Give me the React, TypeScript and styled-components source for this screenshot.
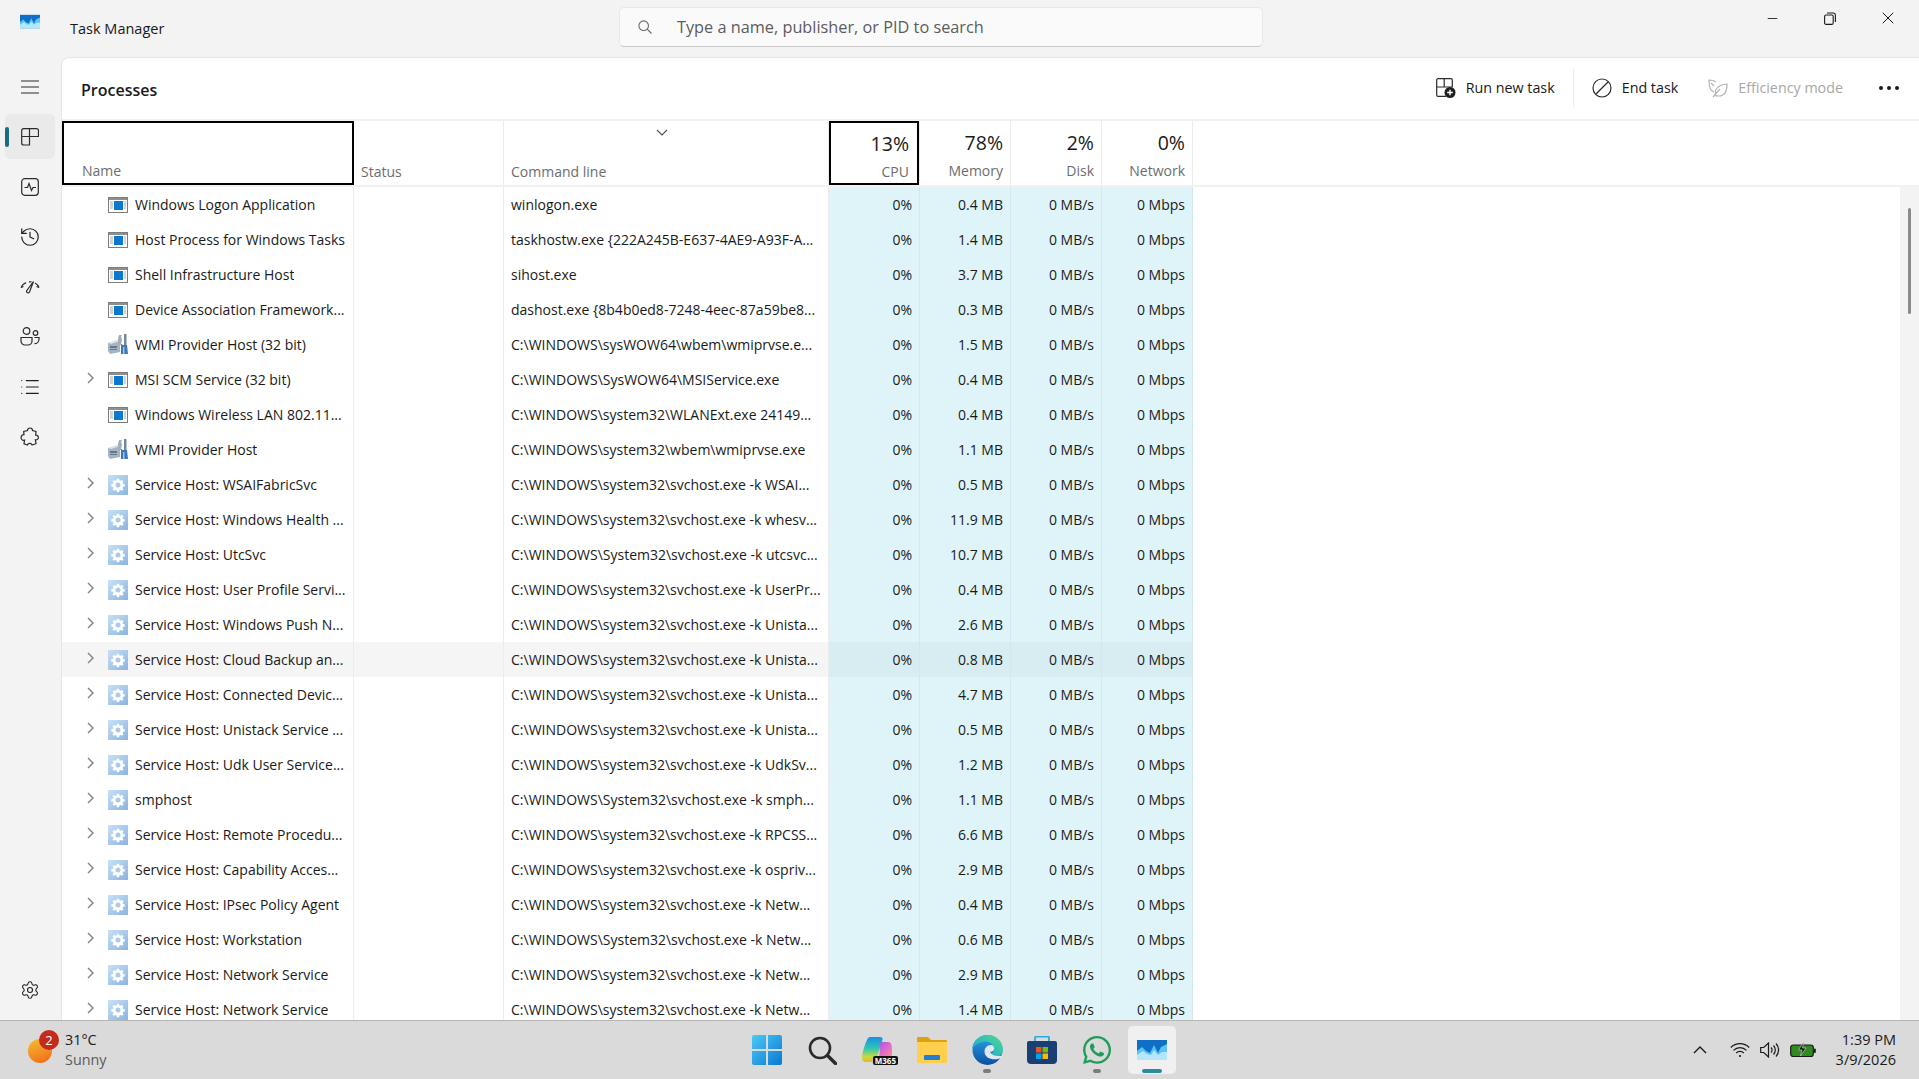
import styled, { createGlobalStyle } from "styled-components";
import { FaWhatsapp } from "react-icons/fa";
import { History, List, Settings, Minus, X } from "lucide-react";

type Kind = "window" | "tool" | "gear";

interface IRow {
  name: string;
  cmd: string;
  mem: string;
  kind: Kind;
  expand?: boolean;
}

const SYS = "C:\\WINDOWS\\system32\\svchost.exe -k ";
const SYS2 = "C:\\WINDOWS\\System32\\svchost.exe -k ";

const rows: IRow[] = [
  { name: "Windows Logon Application", cmd: "winlogon.exe", mem: "0.4 MB", kind: "window" },
  { name: "Host Process for Windows Tasks", cmd: "taskhostw.exe {222A245B-E637-4AE9-A93F-A...", mem: "1.4 MB", kind: "window" },
  { name: "Shell Infrastructure Host", cmd: "sihost.exe", mem: "3.7 MB", kind: "window" },
  { name: "Device Association Framework...", cmd: "dashost.exe {8b4b0ed8-7248-4eec-87a59be8...", mem: "0.3 MB", kind: "window" },
  { name: "WMI Provider Host (32 bit)", cmd: "C:\\WINDOWS\\sysWOW64\\wbem\\wmiprvse.e...", mem: "1.5 MB", kind: "tool" },
  { name: "MSI SCM Service (32 bit)", cmd: "C:\\WINDOWS\\SysWOW64\\MSIService.exe", mem: "0.4 MB", kind: "window", expand: true },
  { name: "Windows Wireless LAN 802.11...", cmd: "C:\\WINDOWS\\system32\\WLANExt.exe 24149...", mem: "0.4 MB", kind: "window" },
  { name: "WMI Provider Host", cmd: "C:\\WINDOWS\\system32\\wbem\\wmiprvse.exe", mem: "1.1 MB", kind: "tool" },
  { name: "Service Host: WSAIFabricSvc", cmd: SYS + "WSAI...", mem: "0.5 MB", kind: "gear", expand: true },
  { name: "Service Host: Windows Health ...", cmd: SYS + "whesv...", mem: "11.9 MB", kind: "gear", expand: true },
  { name: "Service Host: UtcSvc", cmd: SYS2 + "utcsvc...", mem: "10.7 MB", kind: "gear", expand: true },
  { name: "Service Host: User Profile Servi...", cmd: SYS + "UserPr...", mem: "0.4 MB", kind: "gear", expand: true },
  { name: "Service Host: Windows Push N...", cmd: SYS + "Unista...", mem: "2.6 MB", kind: "gear", expand: true },
  { name: "Service Host: Cloud Backup an...", cmd: SYS + "Unista...", mem: "0.8 MB", kind: "gear", expand: true },
  { name: "Service Host: Connected Devic...", cmd: SYS + "Unista...", mem: "4.7 MB", kind: "gear", expand: true },
  { name: "Service Host: Unistack Service ...", cmd: SYS + "Unista...", mem: "0.5 MB", kind: "gear", expand: true },
  { name: "Service Host: Udk User Service...", cmd: SYS + "UdkSv...", mem: "1.2 MB", kind: "gear", expand: true },
  { name: "smphost", cmd: SYS2 + "smph...", mem: "1.1 MB", kind: "gear", expand: true },
  { name: "Service Host: Remote Procedu...", cmd: SYS + "RPCSS...", mem: "6.6 MB", kind: "gear", expand: true },
  { name: "Service Host: Capability Acces...", cmd: SYS + "ospriv...", mem: "2.9 MB", kind: "gear", expand: true },
  { name: "Service Host: IPsec Policy Agent", cmd: SYS + "Netw...", mem: "0.4 MB", kind: "gear", expand: true },
  { name: "Service Host: Workstation", cmd: SYS2 + "Netw...", mem: "0.6 MB", kind: "gear", expand: true },
  { name: "Service Host: Network Service", cmd: SYS + "Netw...", mem: "2.9 MB", kind: "gear", expand: true },
  { name: "Service Host: Network Service", cmd: SYS + "Netw...", mem: "1.4 MB", kind: "gear", expand: true },
];

const HOVER_ROW = 13;
const GEAR_PATH =
  "M12 3.5l1.4 0 .5 2.2 1.6.7 1.9-1.2 1.9 1.9-1.2 1.9.7 1.6 2.2.5v2.8l-2.2.5-.7 1.6 1.2 1.9-1.9 1.9-1.9-1.2-1.6.7-.5 2.2h-2.8l-.5-2.2-1.6-.7-1.9 1.2-1.9-1.9 1.2-1.9-.7-1.6-2.2-.5v-2.8l2.2-.5.7-1.6-1.2-1.9 1.9-1.9 1.9 1.2 1.6-.7.5-2.2z";

function AppLogo({ size = 20, height = 15 }: { size?: number; height?: number }) {
  return (
    <svg width={size} height={height} viewBox="0 0 30 20">
      <rect width="30" height="20" fill="#0f6fc6" />
      <path d="M0 11l5-4 4 4 4 2 4-8 4 8 3-6 6-3v16H0z" fill="#5cc4f5" />
      <path d="M0 15l6-4 4 3 4 1 3-5 4 5 4-3 5 0v8H0z" fill="#b5e6fb" />
    </svg>
  );
}

function RowIcon({ kind }: { kind: Kind }) {
  if (kind === "window") {
    return (
      <svg width="20" height="16" viewBox="0 0 20 16">
        <rect x=".5" y=".5" width="19" height="15" fill="#fff" stroke="#7d7d7d" />
        <rect x="1" y="1" width="18" height="2" fill="#8f8f8f" />
        <rect x="6" y="4" width="9" height="9" fill="#0a78d0" />
        <path d="M2 5h3M2 7h3M2 9h3M2 11h3M16 5h2M16 7h2M16 9h2M16 11h2" stroke="#a9a9a9" />
      </svg>
    );
  }
  if (kind === "tool") {
    return (
      <svg width="20" height="21" viewBox="0 0 20 21">
        <path d="M0 9l12-3v12l-10 2-2-3z" fill="#a3b4c4" />
        <path d="M0 9l11-4 4 1-12 4z" fill="#dde4ea" />
        <path d="M2 12h7v2H2zM2 15h7v1H2z" fill="#66798c" />
        <path d="M10 5l1-4h3l-1 2 1 2-1 6h-2.500z" fill="#a4acb4" />
        <path d="M16 0h2.500v12H16z" fill="#72879b" />
        <path d="M13 10l2 1h4l1 9h-7z" fill="#3a78b8" />
        <path d="M15 13h1.500v7H15z" fill="#9ec4e8" />
      </svg>
    );
  }
  return (
    <svg width="20" height="20" viewBox="0 0 24 24">
      <defs>
        <linearGradient id="tile" x1="0" y1="0" x2="1" y2="1">
          <stop offset="0" stopColor="#c9e0f5" />
          <stop offset="1" stopColor="#8ab4e0" />
        </linearGradient>
      </defs>
      <rect width="24" height="24" fill="url(#tile)" />
      <path d={GEAR_PATH} fill="#fff" transform="translate(1.2 1.2) scale(.9)" />
      <circle cx="12" cy="12" r="3" fill="#a9cbec" />
    </svg>
  );
}

function Chevron() {
  return (
    <svg width="7" height="12" viewBox="0 0 7 12" fill="none" stroke="#808080" strokeWidth="1.4">
      <path d="M1 1l5 5-5 5" />
    </svg>
  );
}

const thin = { strokeWidth: 1.3, color: "#1f1f1f" };

function ProcessesIcon() {
  return (
    <svg width="18" height="18" viewBox="0 0 18 18" fill="none" stroke="#2b2b2b" strokeWidth="1.2">
      <path d="M2.5.7h13a2 2 0 0 1 2 2v5.8H.7V2.5a1.8 1.8 0 0 1 1.8-1.8zM.7 8.500V15a2 2 0 0 0 2 2H8.500V.7" />
    </svg>
  );
}

function PerformanceIcon() {
  return (
    <svg width="18" height="18" viewBox="0 0 18 18" fill="none" stroke="#2b2b2b" strokeWidth="1.2">
      <rect x=".7" y=".7" width="16.6" height="16.6" rx="3" />
      <path d="M3.5 9.5h3l1.5-4 2.5 7 1.500-3h3" />
    </svg>
  );
}

function StartupIcon() {
  return (
    <svg width="20" height="18" viewBox="0 0 20 18" fill="none" stroke="#2b2b2b" strokeWidth="1.2">
      <path d="M1 9.5A9 9 0 0 1 6 4.6M9 3.8h2.500M15 5a9 9 0 0 1 4 4.500" />
      <path d="M13.500 3.500L9.500 14a1.600 1.600 0 0 1-3-1z" />
      <path d="M1 9.500l2.500-1M19 9.500l-2.500-1" />
    </svg>
  );
}

function UsersIcon() {
  return (
    <svg width="20" height="20" viewBox="0 0 20 20" fill="none" stroke="#2b2b2b" strokeWidth="1.2">
      <circle cx="6.500" cy="4" r="3.300" />
      <circle cx="15.500" cy="6" r="2.300" />
      <path d="M1 10.500h11v3.500a4 4 0 0 1-4 4H5a4 4 0 0 1-4-4z" />
      <path d="M14.500 10.500h4.500v2a4.500 4.500 0 0 1-4.500 4.200" />
    </svg>
  );
}

function ServicesIcon() {
  return (
    <svg width="20" height="20" viewBox="0 0 20 20" fill="none" stroke="#2b2b2b" strokeWidth="1.2">
      <path d="M7.500 3.500a2.500 2.500 0 0 1 5 0l3.500 1-.3 3.600a2.400 2.400 0 0 1 2.700 2.400 2.400 2.400 0 0 1-3 2.300l.6 3.900-3.900 1.300a2.500 2.500 0 0 0-4.700 0l-3.400-1.200.5-3.700A2.500 2.500 0 0 1 1.200 10 2.500 2.500 0 0 1 4 7.600l-.3-3.200z" />
    </svg>
  );
}

function RunTaskIcon() {
  return (
    <svg width="20" height="20" viewBox="0 0 20 20">
      <path d="M2 .7h13a1.300 1.300 0 0 1 1.300 1.300v7H.7V2A1.300 1.300 0 0 1 2 .7zM.7 9v8a1.300 1.300 0 0 0 1.300 1.300h8M8.200.7V9" fill="none" stroke="#2b2b2b" strokeWidth="1.2" />
      <circle cx="14" cy="14.500" r="5.500" fill="#1f1f1f" />
      <path d="M14 11.700v5.600M11.200 14.500h5.600" stroke="#fff" strokeWidth="1.400" />
    </svg>
  );
}

function EndTaskIcon() {
  return (
    <svg width="20" height="20" viewBox="0 0 20 20" fill="none" stroke="#2b2b2b" strokeWidth="1.2">
      <circle cx="10" cy="10" r="9" />
      <path d="M4 16L16 4" />
    </svg>
  );
}

function EfficiencyIcon() {
  return (
    <svg width="20" height="20" viewBox="0 0 20 20" fill="none" stroke="#b4b4b4" strokeWidth="1.2">
      <path d="M6 14C2 13 1 8 1 2c3 0 5 .6 7 2" />
      <path d="M8 18c-2-5 0-11 11-12 0 7-2 12-8 12-1.200 0-2.200-.2-3 0zM5 19l7-8" />
      <path d="M3 5l3 3" />
    </svg>
  );
}

function SearchIcon() {
  return (
    <svg width="14" height="14" viewBox="0 0 14 14" fill="none" stroke="#6a6a6a" strokeWidth="1.1">
      <circle cx="5.700" cy="5.700" r="4.800" />
      <path d="M9.200 9.200l4.300 4.300" />
    </svg>
  );
}

function RestoreIcon() {
  return (
    <svg width="12" height="13" viewBox="0 0 12 13" fill="none" stroke="#1a1a1a" strokeWidth="1.100">
      <rect x=".6" y="3" width="8.600" height="9.400" rx="1.500" />
      <path d="M3 1h6.500A2 2 0 0 1 11.400 3v7" />
    </svg>
  );
}

function StartLogo() {
  return (
    <svg width="30" height="30" viewBox="0 0 30 30">
      <defs>
        <linearGradient id="win" x1="0" y1="0" x2="1" y2="1">
          <stop offset="0" stopColor="#4cc9f5" />
          <stop offset="1" stopColor="#0a78d4" />
        </linearGradient>
      </defs>
      <path d="M2 0h12v14H0V2a2 2 0 0 1 2-2zM16 0h12a2 2 0 0 1 2 2v12H16zM0 16h14v14H2a2 2 0 0 1-2-2zM16 16h14v12a2 2 0 0 1-2 2H16z" fill="url(#win)" />
    </svg>
  );
}

function TaskbarSearch() {
  return (
    <svg width="29" height="29" viewBox="0 0 29 29" fill="none" stroke="#2a2a2a">
      <circle cx="12" cy="12" r="10" strokeWidth="2.600" />
      <path d="M19.500 19.500l8 8" strokeWidth="3.400" strokeLinecap="round" />
    </svg>
  );
}

function M365Logo() {
  return (
    <svg width="30" height="27" viewBox="0 0 30 27">
      <defs>
        <linearGradient id="cpa" x1="0" y1="0" x2="0" y2="1">
          <stop offset="0" stopColor="#1a8fe8" />
          <stop offset=".45" stopColor="#2fc6b0" />
          <stop offset=".8" stopColor="#c8dc3a" />
          <stop offset="1" stopColor="#f0b030" />
        </linearGradient>
        <linearGradient id="cpb" x1="0" y1="0" x2="1" y2="1">
          <stop offset="0" stopColor="#7a5cf0" />
          <stop offset=".55" stopColor="#e868c8" />
          <stop offset="1" stopColor="#f59a8a" />
        </linearGradient>
      </defs>
      <path d="M8 0h10c2 0 3 1 2.500 3L15 20c-1 3-3 5-6 5H4c-3 0-4-2-4-4C0 16 3 7 5 3c.6-2 2-3 3-3z" fill="url(#cpa)" />
      <path d="M18 5h8c2 0 3 1 3.500 3 .6 3 .5 7 .5 9 0 3-2 5-5 5H13c3 0 4-2 4.500-4z" fill="url(#cpb)" />
    </svg>
  );
}

function FolderLogo() {
  return (
    <svg width="30" height="26" viewBox="0 0 30 26">
      <path d="M1 0h10l3 3h15a1 1 0 0 1 1 1v8H0V1a1 1 0 0 1 1-1z" fill="#dca30f" />
      <path d="M0 5h30v20a1 1 0 0 1-1 1H1a1 1 0 0 1-1-1z" fill="#ffcf4d" />
      <rect x="7" y="18" width="16" height="5" rx="1" fill="#1f7fd0" />
    </svg>
  );
}

function EdgeLogo() {
  return (
    <svg width="31" height="30" viewBox="0 0 31 30">
      <defs>
        <linearGradient id="ea" x1="0" y1="1" x2="1" y2="0">
          <stop offset="0" stopColor="#1a9de0" />
          <stop offset="1" stopColor="#4fdc8c" />
        </linearGradient>
        <linearGradient id="eb" x1="0" y1="0" x2="0" y2="1">
          <stop offset="0" stopColor="#2aa6e8" />
          <stop offset="1" stopColor="#0c4fa0" />
        </linearGradient>
      </defs>
      <circle cx="15.500" cy="15" r="15" fill="url(#eb)" />
      <path d="M15.500 0C24 0 31 6 31 15c0 4.500-4 7-8 7l-6-3c3 0 5-1.500 5-5 0-4-4-8-9-7.500-5 .5-10 3-13 7.500C1 5 8 0 15.500 0z" fill="url(#ea)" />
      <path d="M12.500 16.500c0-4 3.500-7 7-6.500 2 .3 3 2.500 2.500 4.500-.6 1.800-2.600 2.700-4 2.200 1.500 3.500 6.500 5.500 12.500 3.800l-.8 2C24 26 12.500 24.500 12.500 16.500z" fill="#dfe8ee" />
    </svg>
  );
}

function StoreLogo() {
  return (
    <svg width="30" height="29" viewBox="0 0 30 29">
      <path d="M8 6V2a1.500 1.500 0 0 1 1.500-1.500h11A1.500 1.500 0 0 1 22 2v4" fill="none" stroke="#2ea8e0" strokeWidth="1.800" />
      <path d="M2 5h26a2 2 0 0 1 2 2v17a4 4 0 0 1-4 4H4a4 4 0 0 1-4-4V7a2 2 0 0 1 2-2z" fill="#1a3f75" />
      <rect x="9" y="11" width="5.500" height="5.500" fill="#f05022" />
      <rect x="15.500" y="11" width="5.500" height="5.500" fill="#7fba00" />
      <rect x="9" y="17.500" width="5.500" height="5.500" fill="#00a4ef" />
      <rect x="15.500" y="17.500" width="5.500" height="5.500" fill="#ffb900" />
    </svg>
  );
}

function WifiIcon() {
  return (
    <svg width="20" height="16" viewBox="0 0 20 16" fill="none" stroke="#1a1a1a" strokeWidth="1.200">
      <path d="M.8 5.500a13 13 0 0 1 18.400 0M3.500 8.300a9.200 9.200 0 0 1 13 0M6.200 11a5.300 5.300 0 0 1 7.600 0" />
      <circle cx="10" cy="14" r="1.100" fill="#1a1a1a" stroke="none" />
    </svg>
  );
}

function VolumeIcon() {
  return (
    <svg width="20" height="16" viewBox="0 0 20 16" fill="none" stroke="#1a1a1a" strokeWidth="1.200">
      <path d="M.7 5.500h3L8.500 1v14l-4.800-4.500h-3z" />
      <path d="M11 5.500a3.500 3.500 0 0 1 0 5M13.500 3.500a6.500 6.500 0 0 1 0 9M16 1.500a9.500 9.500 0 0 1 0 13" />
    </svg>
  );
}

function BatteryIcon() {
  return (
    <svg width="26" height="16" viewBox="0 0 26 16">
      <rect x=".7" y="3" width="22.600" height="11.500" rx="2.500" fill="#2f8a1f" stroke="#1a1a1a" strokeWidth="1.200" />
      <rect x="24" y="6.500" width="1.800" height="4.500" rx=".8" fill="#1a1a1a" />
      <path d="M13.500 0L8.500 8h3.500l-1.500 6 5.500-8h-3.500z" fill="#1a1a1a" stroke="#dadada" strokeWidth=".6" />
    </svg>
  );
}

export default function App() {
  return (
    <Screen>
      <GlobalStyle />
      <Window>
        <TitleBar>
          <TitleLeft>
            <LogoSlot>
              <AppLogo />
            </LogoSlot>
            <AppTitle>Task Manager</AppTitle>
          </TitleLeft>
          <SearchBox>
            <SearchIcon />
            <SearchText>Type a name, publisher, or PID to search</SearchText>
          </SearchBox>
          <WindowButtons>
            <WindowButton>
              <Minus size={15} strokeWidth={1.4} color="#1a1a1a" />
            </WindowButton>
            <WindowButton>
              <RestoreIcon />
            </WindowButton>
            <WindowButton>
              <X size={20} strokeWidth={1.2} color="#1a1a1a" />
            </WindowButton>
          </WindowButtons>
        </TitleBar>

        <Main>
          <Sidebar>
            <NavItem $first>
              <svg width="18" height="14" viewBox="0 0 18 14" stroke="#2b2b2b" strokeWidth="1.2">
                <path d="M0 1h18M0 7h18M0 13h18" />
              </svg>
            </NavItem>
            <NavItem $active>
              <ProcessesIcon />
            </NavItem>
            <NavItem>
              <PerformanceIcon />
            </NavItem>
            <NavItem>
              <History size={22} {...thin} />
            </NavItem>
            <NavItem>
              <StartupIcon />
            </NavItem>
            <NavItem>
              <UsersIcon />
            </NavItem>
            <NavItem>
              <List size={22} {...thin} />
            </NavItem>
            <NavItem>
              <ServicesIcon />
            </NavItem>
            <NavSpacer />
            <NavItem>
              <Settings size={20} {...thin} />
            </NavItem>
          </Sidebar>

          <Content>
            <Header>
              <PageTitle>Processes</PageTitle>
              <Actions>
                <ActionButton>
                  <RunTaskIcon />
                  Run new task
                </ActionButton>
                <ActionDivider />
                <ActionButton>
                  <EndTaskIcon />
                  End task
                </ActionButton>
                <ActionButton $disabled>
                  <EfficiencyIcon />
                  Efficiency mode
                </ActionButton>
                <MoreDots>
                  <i />
                  <i />
                  <i />
                </MoreDots>
              </Actions>
            </Header>

            <TableHead>
              <NameHead>Name</NameHead>
              <TextHead>Status</TextHead>
              <TextHead>
                <SortMark>
                  <svg width="12" height="7" viewBox="0 0 12 7" fill="none" stroke="#555" strokeWidth="1.200">
                    <path d="M1 1l5 5 5-5" />
                  </svg>
                </SortMark>
                Command line
              </TextHead>
              <HeatHead $focused>
                <Percent>13%</Percent>
                <HeatLabel>CPU</HeatLabel>
              </HeatHead>
              <HeatHead>
                <Percent>78%</Percent>
                <HeatLabel>Memory</HeatLabel>
              </HeatHead>
              <HeatHead>
                <Percent>2%</Percent>
                <HeatLabel>Disk</HeatLabel>
              </HeatHead>
              <HeatHead>
                <Percent>0%</Percent>
                <HeatLabel>Network</HeatLabel>
              </HeatHead>
              <span />
            </TableHead>

            <TableBody>
              <RowList>
                {rows.map((row, idx) => (
                  <Row key={idx}>
                    <NameCell $hover={idx === HOVER_ROW}>
                      <ChevronSlot>{row.expand && <Chevron />}</ChevronSlot>
                      <IconSlot>
                        <RowIcon kind={row.kind} />
                      </IconSlot>
                      <CellText>{row.name}</CellText>
                    </NameCell>
                    <StatusCell $hover={idx === HOVER_ROW} />
                    <CmdCell $hover={idx === HOVER_ROW}>
                      <CellText>{row.cmd}</CellText>
                    </CmdCell>
                    <HeatCell $hover={idx === HOVER_ROW}>0%</HeatCell>
                    <HeatCell $hover={idx === HOVER_ROW}>{row.mem}</HeatCell>
                    <HeatCell $hover={idx === HOVER_ROW}>0 MB/s</HeatCell>
                    <HeatCell $hover={idx === HOVER_ROW}>0 Mbps</HeatCell>
                  </Row>
                ))}
              </RowList>
              <ScrollTrack>
                <ScrollThumb />
              </ScrollTrack>
            </TableBody>
          </Content>
        </Main>
      </Window>

      <Taskbar>
        <Weather>
          <SunSlot>
            <Sun />
            <Badge>2</Badge>
          </SunSlot>
          <WeatherText>
            <Temp>31°C</Temp>
            <Sky>Sunny</Sky>
          </WeatherText>
        </Weather>

        <Dock>
          <DockButton>
            <StartLogo />
          </DockButton>
          <DockButton>
            <TaskbarSearch />
          </DockButton>
          <DockButton>
            <M365Logo />
            <M365Tag>M365</M365Tag>
          </DockButton>
          <DockButton>
            <FolderLogo />
          </DockButton>
          <DockButton>
            <EdgeLogo />
            <RunDot />
          </DockButton>
          <DockButton>
            <StoreLogo />
          </DockButton>
          <DockButton>
            <FaWhatsapp size={32} color="#1c9d5a" />
            <RunDot />
          </DockButton>
          <DockButton $active>
            <AppLogo size={30} height={20} />
            <RunDot $active />
          </DockButton>
        </Dock>

        <Tray>
          <svg width="14" height="8" viewBox="0 0 14 8" fill="none" stroke="#1a1a1a" strokeWidth="1.400">
            <path d="M1 7l6-6 6 6" />
          </svg>
          <TrayIcons>
            <WifiIcon />
            <VolumeIcon />
            <BatteryIcon />
          </TrayIcons>
          <Clock>
            <span>1:39 PM</span>
            <span>3/9/2026</span>
          </Clock>
        </Tray>
      </Taskbar>
    </Screen>
  );
}

const COLUMNS = "292px 150px 325px 91px 91px 91px 91px 1fr";
const FONT = `"Open Sans", "Noto Sans", sans-serif`;

const GlobalStyle = createGlobalStyle`
  html, body {
    margin: 0;
    height: 100%;
    overflow: hidden;
    background: #f3f3f3;
  }
  #root {
    height: 100%;
  }
  * {
    box-sizing: border-box;
  }
`;

const Screen = styled.div`
  display: flex;
  flex-direction: column;
  height: 100vh;
  font-family: ${FONT};
  font-size: 14px;
  color: #1a1a1a;
`;

const Window = styled.div`
  flex: 1;
  min-height: 0;
  display: flex;
  flex-direction: column;
  background: #f3f3f3;
`;

const TitleBar = styled.div`
  flex: 0 0 57px;
  display: flex;
  align-items: flex-start;
`;

const TitleLeft = styled.div`
  width: 619px;
  display: flex;
  align-items: flex-start;
`;

const LogoSlot = styled.div`
  display: flex;
  margin: 14px 0 0 20px;
`;

const AppTitle = styled.div`
  margin: 18px 0 0 30px;
  font-size: 14.500px;
  line-height: 22px;
`;

const SearchBox = styled.div`
  width: 644px;
  height: 40px;
  margin-top: 7px;
  display: flex;
  align-items: center;
  gap: 25px;
  padding-left: 18px;
  background: #fafafa;
  border: 1px solid #e8e8e8;
  border-bottom-color: #c8c8c8;
  border-radius: 5px;
`;

const SearchText = styled.span`
  font-size: 16.300px;
  color: #5c5c5c;
`;

const WindowButtons = styled.div`
  margin-left: auto;
  padding-right: 2px;
  display: flex;
`;

const WindowButton = styled.div`
  width: 58px;
  height: 36px;
  display: flex;
  align-items: center;
  justify-content: center;
`;

const Main = styled.div`
  flex: 1;
  min-height: 0;
  display: flex;
`;

const Sidebar = styled.div`
  flex: 0 0 61px;
  display: flex;
  flex-direction: column;
  align-items: flex-start;
  gap: 5px;
  padding: 7px 0 8px 5px;
`;

const NavSpacer = styled.div`
  flex: 1;
`;

const NavItem = styled.div<{ $active?: boolean; $first?: boolean }>`
  position: relative;
  width: 50px;
  height: 45px;
  flex: none;
  display: flex;
  align-items: center;
  justify-content: center;
  border-radius: 5px;
  background: ${(p) => (p.$active ? "#eaeaea" : "transparent")};

  ${(p) =>
    p.$active &&
    `
    &::before {
      content: "";
      position: absolute;
      left: 0;
      top: 13px;
      width: 4px;
      height: 20px;
      border-radius: 2px;
      background: #1a6d80;
    }
  `}
`;

const Content = styled.div`
  flex: 1;
  min-width: 0;
  display: flex;
  flex-direction: column;
  background: #fff;
  border-top: 1px solid #e6e6e6;
  border-left: 1px solid #e6e6e6;
  border-top-left-radius: 8px;
`;

const Header = styled.div`
  flex: 0 0 63px;
  display: flex;
  align-items: center;
  justify-content: space-between;
  padding: 0 20px 0 19px;
  border-bottom: 2px solid #f1f1f1;
`;

const PageTitle = styled.div`
  font-size: 16px;
  font-weight: 600;
  margin-top: 2px;
`;

const Actions = styled.div`
  display: flex;
  align-items: center;
  margin-top: -2px;
`;

const ActionButton = styled.div<{ $disabled?: boolean }>`
  display: flex;
  align-items: center;
  gap: 10px;
  font-size: 14.300px;
  color: ${(p) => (p.$disabled ? "#a8a8a8" : "#1a1a1a")};
  margin-left: ${(p) => (p.$disabled ? "30px" : "0")};
`;

const ActionDivider = styled.div`
  width: 1px;
  height: 39px;
  background: #ececec;
  margin: 0 18px;
`;

const MoreDots = styled.div`
  display: flex;
  gap: 4px;
  margin-left: 36px;

  i {
    width: 4px;
    height: 4px;
    border-radius: 50%;
    background: #1a1a1a;
  }
`;

const TableHead = styled.div`
  flex: 0 0 66px;
  display: grid;
  grid-template-columns: ${COLUMNS};
  border-bottom: 2px solid #f1f1f1;
  color: #6d6d6d;
`;

const TextHead = styled.div`
  position: relative;
  display: flex;
  align-items: flex-end;
  padding: 0 0 1px 7px;
  line-height: 24px;
  border-right: 1px solid #ececec;
`;

const NameHead = styled(TextHead)`
  padding: 0 0 2px 20px;
  box-shadow: inset 0 0 0 2px #000;
  border-right: none;
`;

const SortMark = styled.span`
  position: absolute;
  top: 8px;
  left: 152px;
  display: flex;
`;

const HeatHead = styled.div<{ $focused?: boolean }>`
  display: flex;
  flex-direction: column;
  align-items: flex-end;
  padding: ${(p) => (p.$focused ? "10px 10px 0 0" : "9px 7px 0 0")};
  border-right: 1px solid #ececec;
  box-shadow: ${(p) => (p.$focused ? "inset 0 0 0 2px #000" : "none")};
`;

const Percent = styled.div`
  font-size: 19.500px;
  line-height: 26px;
  color: #1a1a1a;
`;

const HeatLabel = styled.div`
  margin-top: 4px;
  line-height: 22px;
`;

const TableBody = styled.div`
  flex: 1;
  min-height: 0;
  display: flex;
  overflow: hidden;
`;

const RowList = styled.div`
  flex: 1;
  min-width: 0;
`;

const Row = styled.div`
  height: 35px;
  display: grid;
  grid-template-columns: ${COLUMNS};
`;

const BaseCell = styled.div<{ $hover?: boolean }>`
  display: flex;
  align-items: center;
  min-width: 0;
  border-right: 1px solid #ececec;
  background: ${(p) => (p.$hover ? "#f5f5f5" : "#fff")};
`;

const NameCell = styled(BaseCell)`
  padding-left: 25px;
`;

const ChevronSlot = styled.div`
  flex: 0 0 21px;
  display: flex;
  margin-top: -4px;
`;

const IconSlot = styled.div`
  flex: 0 0 27px;
  display: flex;
`;

const CellText = styled.span`
  white-space: nowrap;
  overflow: hidden;
`;

const StatusCell = styled(BaseCell)``;

const CmdCell = styled(BaseCell)`
  padding-left: 7px;
`;

const HeatCell = styled.div<{ $hover?: boolean }>`
  display: flex;
  align-items: center;
  justify-content: flex-end;
  padding-right: 7px;
  background: ${(p) => (p.$hover ? "#d8edf1" : "#dff4f8")};
  border-right: 1px solid #d2e8ec;
`;

const ScrollTrack = styled.div`
  flex: 0 0 19px;
  background: #f3f3f3;
  padding: 21px 0 0 8px;
`;

const ScrollThumb = styled.div`
  width: 3px;
  height: 106px;
  border-radius: 2px;
  background: #8a8a8a;
`;

const Taskbar = styled.div`
  flex: 0 0 59px;
  display: grid;
  grid-template-columns: 1fr auto 1fr;
  align-items: center;
  background: #dadada;
  border-top: 1px solid #b4b4b4;
`;

const Weather = styled.div`
  display: flex;
  align-items: center;
  padding-left: 28px;
  gap: 13px;
`;

const SunSlot = styled.div`
  position: relative;
  width: 24px;
  height: 24px;
  margin-top: 2px;
`;

const Sun = styled.div`
  width: 24px;
  height: 24px;
  border-radius: 50%;
  background: linear-gradient(160deg, #f5c02c, #f0661a);
`;

const Badge = styled.div`
  position: absolute;
  top: -9px;
  left: 11px;
  width: 20px;
  height: 20px;
  border-radius: 50%;
  background: #c42b1c;
  color: #fff;
  font-size: 13px;
  line-height: 20px;
  text-align: center;
`;

const WeatherText = styled.div`
  display: flex;
  flex-direction: column;
  line-height: 20px;
  font-size: 14.400px;
`;

const Temp = styled.span``;

const Sky = styled.span`
  color: #5a5a5a;
`;

const Dock = styled.div`
  display: flex;
  gap: 7px;
`;

const DockButton = styled.div<{ $active?: boolean }>`
  position: relative;
  width: 48px;
  height: 48px;
  display: flex;
  align-items: center;
  justify-content: center;
  border-radius: 5px;
  background: ${(p) => (p.$active ? "#f0f0f0" : "transparent")};
`;

const M365Tag = styled.span`
  position: absolute;
  right: 3px;
  bottom: 9px;
  padding: 0 2px;
  background: #111;
  color: #fff;
  border-radius: 2px;
  font-size: 8px;
  font-weight: 700;
  line-height: 9px;
`;

const RunDot = styled.span<{ $active?: boolean }>`
  position: absolute;
  bottom: 1px;
  left: 50%;
  transform: translateX(-50%);
  width: ${(p) => (p.$active ? "20px" : "8px")};
  height: 4px;
  border-radius: 2px;
  background: ${(p) => (p.$active ? "#2a8a9e" : "#7c7c7c")};
`;

const Tray = styled.div`
  display: flex;
  align-items: center;
  justify-content: flex-end;
  padding-right: 23px;
`;

const TrayIcons = styled.div`
  display: flex;
  align-items: center;
  gap: 10px;
  margin: 0 20px 0 23px;
`;

const Clock = styled.div`
  display: flex;
  flex-direction: column;
  align-items: flex-end;
  line-height: 20px;
  font-size: 14.500px;
`;
